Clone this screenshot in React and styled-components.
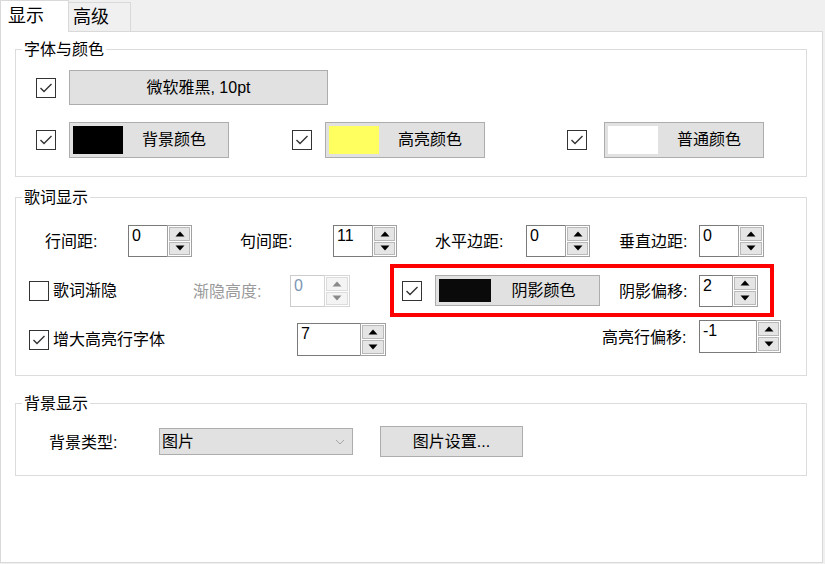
import React from 'react';
import styled, { createGlobalStyle } from 'styled-components';

const FONT = `"Liberation Sans", "Noto Sans CJK SC", sans-serif`;

const GlobalStyle = createGlobalStyle`
  html, body {
    margin: 0;
    padding: 0;
    background: #f0f0f0;
  }
  body {
    font-family: ${FONT};
    color: #000;
  }
`;

const Window = styled.div`
  width: 825px;
  height: 564px;
  background: #f0f0f0;
  display: flex;
  flex-direction: column;
`;

const TabBar = styled.div`
  display: flex;
  align-items: flex-end;
  height: 31px;
`;

const Tab = styled.div`
  position: relative;
  box-sizing: border-box;
  width: ${(p) => (p.active ? 69 : 62)}px;
  height: ${(p) => (p.active ? 32 : 29)}px;
  margin-bottom: ${(p) => (p.active ? -1 : 0)}px;
  z-index: ${(p) => (p.active ? 2 : 1)};
  background: ${(p) => (p.active ? '#ffffff' : '#f0f0f0')};
  border: 1px solid #d9d9d9;
  border-bottom: none;
  border-left: ${(p) => (p.active ? '1px solid #d9d9d9' : 'none')};
  padding-left: ${(p) => (p.active ? 7 : 4)}px;
  padding-top: ${(p) => (p.active ? 3 : 2)}px;
  font-size: 18px;
  line-height: 24px;
`;

const Panel = styled.div`
  position: relative;
  z-index: 1;
  box-sizing: border-box;
  width: 823px;
  height: 532px;
  background: #ffffff;
  border: 1px solid #d9d9d9;
  padding: 17px 15px 0 14px;
`;

const Group = styled.div`
  position: relative;
  border: 1px solid #dcdcdc;
  padding: ${(p) => p.pad};
  margin-bottom: ${(p) => p.mb || 0}px;
  display: flex;
  flex-direction: column;
  gap: ${(p) => p.gap || 0}px;
`;

const Legend = styled.div`
  position: absolute;
  top: -10px;
  left: 6px;
  padding: 0 2px;
  background: #ffffff;
  font-size: 16px;
  line-height: 20px;
`;

const Row = styled.div`
  display: flex;
  align-items: center;
  height: ${(p) => p.h}px;
  padding-left: ${(p) => p.pl}px;
  margin-top: ${(p) => p.mt || 0}px;
`;

const ColorGrid = styled.div`
  display: grid;
  grid-template-columns: 256px 275px auto;
  align-items: center;
  height: 36px;
  padding-left: 20px;
`;

const Cell = styled.div`
  display: flex;
  align-items: center;
  gap: ${(p) => p.gap || 13}px;
`;

const Box = styled.div`
  box-sizing: border-box;
  width: 20px;
  height: 20px;
  flex: none;
  border: 1px solid #333333;
  background: #ffffff;
  display: flex;
  align-items: center;
  justify-content: center;
`;

const Button = styled.div`
  box-sizing: border-box;
  width: ${(p) => p.w}px;
  height: ${(p) => p.h}px;
  flex: none;
  background: #e1e1e1;
  border: 1px solid #adadad;
  display: flex;
  align-items: center;
  justify-content: center;
  font-size: 16px;
  line-height: 20px;
  margin-left: ${(p) => p.ml || 0}px;
`;

const ColorBtn = styled.div`
  box-sizing: border-box;
  width: ${(p) => p.w}px;
  height: ${(p) => p.h}px;
  flex: none;
  background: #e1e1e1;
  border: 1px solid #adadad;
  padding: 3px;
  display: flex;
  align-items: stretch;
  font-size: 16px;
`;

const Swatch = styled.div`
  width: ${(p) => p.w || 50}px;
  background: ${(p) => p.color};
`;

const SwatchText = styled.div`
  flex: 1;
  display: flex;
  align-items: center;
  justify-content: center;
  line-height: 20px;
`;

const Label = styled.div`
  width: ${(p) => p.w}px;
  flex: none;
  font-size: 16px;
  line-height: 20px;
  padding-top: 2px;
  white-space: nowrap;
  color: ${(p) => (p.disabled ? '#9a9a9a' : '#000')};
  margin-left: ${(p) => p.ml || 0}px;
`;

const CheckItem = styled.div`
  display: flex;
  align-items: center;
  gap: 4px;
  width: ${(p) => p.w}px;
  flex: none;
  font-size: 16px;
  line-height: 20px;
`;

const Field = styled.div`
  display: flex;
  align-items: center;
  margin-left: ${(p) => p.ml || 0}px;
  margin-top: ${(p) => p.mt || 0}px;
`;

const SpinWrap = styled.div`
  display: flex;
  height: ${(p) => p.h || 32}px;
  flex: none;
`;

const SpinEdit = styled.div`
  box-sizing: border-box;
  width: ${(p) => p.w}px;
  border: 1px solid ${(p) => (p.disabled ? '#cccccc' : '#7a7a7a')};
  border-right: none;
  background: #ffffff;
  padding-left: 3px;
  font-size: 16px;
  line-height: 20px;
  color: ${(p) => (p.disabled ? '#7d95b5' : '#000')};
`;

const SpinButtons = styled.div`
  box-sizing: border-box;
  width: ${(p) => p.w || 26}px;
  border: 1px solid ${(p) => (p.disabled ? '#d6d6d6' : '#a0a0a0')};
  background: #ffffff;
  padding: 1px;
  display: flex;
  flex-direction: column;
  gap: 1px;
`;

const SpinBtn = styled.div`
  flex: 1;
  background: ${(p) => (p.disabled ? '#f4f4f4' : '#e5e5e5')};
  border: 1px solid ${(p) => (p.disabled ? '#dcdcdc' : '#b9b9b9')};
  display: flex;
  align-items: center;
  justify-content: center;
`;

const Highlight = styled.div`
  box-sizing: border-box;
  height: 53px;
  margin: -11px 0 -10px 40px;
  border: 4px solid #ff0000;
  padding: 0 12px 0 8px;
  display: flex;
  align-items: center;
`;

const Combo = styled.div`
  box-sizing: border-box;
  width: 194px;
  height: 27px;
  background: #e1e1e1;
  border: 1px solid #adadad;
  display: flex;
  align-items: center;
  justify-content: space-between;
  padding: 0 7px 0 2px;
  font-size: 16px;
  line-height: 20px;
`;

const Check = () => (
  <svg width="14" height="12" viewBox="0 0 14 12">
    <polyline points="1.5,6 5,9.5 12.5,2" fill="none" stroke="#333" strokeWidth="1.4" />
  </svg>
);

const CheckBox = ({ checked }) => <Box>{checked && <Check />}</Box>;

const Arrow = ({ up, disabled }) => (
  <svg width="10" height="6" viewBox="0 0 10 6">
    <polygon
      points={up ? '0.5,5.5 5,0.5 9.5,5.5' : '0.5,0.5 9.5,0.5 5,5.5'}
      fill={disabled ? '#8a8a8a' : '#000'}
    />
  </svg>
);

const Spin = ({ value, w, bw, h, disabled }) => (
  <SpinWrap h={h}>
    <SpinEdit w={w} disabled={disabled}>{value}</SpinEdit>
    <SpinButtons w={bw} disabled={disabled}>
      <SpinBtn disabled={disabled}><Arrow up disabled={disabled} /></SpinBtn>
      <SpinBtn disabled={disabled}><Arrow disabled={disabled} /></SpinBtn>
    </SpinButtons>
  </SpinWrap>
);

const Chevron = () => (
  <svg width="10" height="6" viewBox="0 0 10 6">
    <polyline points="1,1 5,5 9,1" fill="none" stroke="#a6a6a6" strokeWidth="1" />
  </svg>
);

export default function App() {
  return (
    <>
      <GlobalStyle />
      <Window>
        <TabBar>
          <Tab active>显示</Tab>
          <Tab>高级</Tab>
        </TabBar>
        <Panel>
          <Group pad="20px 0 18px 0" gap={17} mb={20}>
            <Legend>字体与颜色</Legend>
            <Row h={35} pl={20}>
              <Cell>
                <CheckBox checked />
                <Button w={259} h={35}>微软雅黑, 10pt</Button>
              </Cell>
            </Row>
            <ColorGrid>
              <Cell>
                <CheckBox checked />
                <ColorBtn w={160} h={36}>
                  <Swatch color="#000000" />
                  <SwatchText>背景颜色</SwatchText>
                </ColorBtn>
              </Cell>
              <Cell>
                <CheckBox checked />
                <ColorBtn w={160} h={36}>
                  <Swatch color="#ffff60" />
                  <SwatchText>高亮颜色</SwatchText>
                </ColorBtn>
              </Cell>
              <Cell gap={17}>
                <CheckBox checked />
                <ColorBtn w={160} h={36}>
                  <Swatch color="#ffffff" />
                  <SwatchText>普通颜色</SwatchText>
                </ColorBtn>
              </Cell>
            </ColorGrid>
          </Group>

          <Group pad="27px 0 19px 0" mb={27}>
            <Legend>歌词显示</Legend>
            <Row h={32} pl={29}>
              <Field>
                <Label w={83}>行间距:</Label>
                <Spin value="0" w={39} bw={25} />
              </Field>
              <Field ml={48}>
                <Label w={93}>句间距:</Label>
                <Spin value="11" w={39} bw={25} />
              </Field>
              <Field ml={38}>
                <Label w={91}>水平边距:</Label>
                <Spin value="0" w={39} bw={25} />
              </Field>
              <Field ml={29}>
                <Label w={80}>垂直边距:</Label>
                <Spin value="0" w={39} bw={26} />
              </Field>
            </Row>
            <Row h={32} pl={13} mt={18}>
              <CheckItem w={164}>
                <CheckBox />
                歌词渐隐
              </CheckItem>
              <Field>
                <Label w={97} disabled>渐隐高度:</Label>
                <Spin value="0" w={34} bw={26} disabled />
              </Field>
              <Highlight>
                <Cell>
                  <CheckBox checked />
                  <ColorBtn w={165} h={31}>
                    <Swatch color="#0a0a0a" w={52} />
                    <SwatchText>阴影颜色</SwatchText>
                  </ColorBtn>
                </Cell>
                <Field ml={19}>
                  <Label w={80}>阴影偏移:</Label>
                  <Spin value="2" w={33} bw={26} />
                </Field>
              </Highlight>
            </Row>
            <Row h={33} pl={13} mt={16}>
              <CheckItem w={268}>
                <CheckBox checked />
                增大高亮行字体
              </CheckItem>
              <Spin value="7" w={63} bw={26} h={33} />
              <Field ml={216} mt={-6}>
                <Label w={97}>高亮行偏移:</Label>
                <Spin value="-1" w={57} bw={25} h={33} />
              </Field>
            </Row>
          </Group>

          <Group pad="22px 0 18px 0">
            <Legend>背景显示</Legend>
            <Row h={31} pl={33}>
              <Label w={110}>背景类型:</Label>
              <Combo>
                图片
                <Chevron />
              </Combo>
              <Button w={143} h={31} ml={27}>图片设置...</Button>
            </Row>
          </Group>
        </Panel>
      </Window>
    </>
  );
}
